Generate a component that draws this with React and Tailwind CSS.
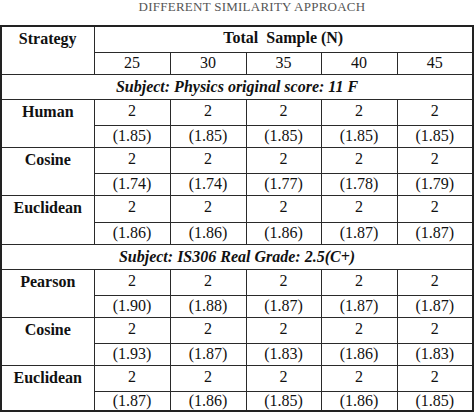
const samples = [25, 30, 35, 40, 45];

const sections = [
  {
    subject: "Subject: Physics original score: 11 F",
    rows: [
      { name: "Human", vals: ["(1.85)", "(1.85)", "(1.85)", "(1.85)", "(1.85)"], h: 26, v: 22 },
      { name: "Cosine", vals: ["(1.74)", "(1.74)", "(1.77)", "(1.78)", "(1.79)"], h: 26, v: 22 },
      { name: "Euclidean", vals: ["(1.86)", "(1.86)", "(1.86)", "(1.87)", "(1.87)"], h: 27, v: 22 },
    ],
  },
  {
    subject: "Subject: IS306 Real Grade: 2.5(C+)",
    rows: [
      { name: "Pearson", vals: ["(1.90)", "(1.88)", "(1.87)", "(1.87)", "(1.87)"], h: 26, v: 22 },
      { name: "Cosine", vals: ["(1.93)", "(1.87)", "(1.83)", "(1.86)", "(1.83)"], h: 26, v: 22 },
      { name: "Euclidean", vals: ["(1.87)", "(1.86)", "(1.85)", "(1.86)", "(1.85)"], h: 26, v: 20 },
    ],
  },
];

const cell =
  "border border-[#2a2a2a] text-center align-middle p-0 leading-[16px] text-[16px] font-[Liberation_Serif,Times_New_Roman,serif]";

export default function App() {
  return (
    <div className="w-[474px] h-[413px] bg-white text-[#111] font-[Liberation_Serif,Times_New_Roman,serif] overflow-hidden">
      <div className="h-[25px] pt-[1px] pl-[30px] text-center text-[13px] leading-[12px] text-[#555] tracking-[0.25px]">
        DIFFERENT SIMILARITY APPROACH
      </div>
      <table className="table-fixed border-collapse border-2 border-[#222] w-[472px] text-[16px] font-[Liberation_Serif,Times_New_Roman,serif] text-[#111]">
        <colgroup>
          <col className="w-[93px]" />
          <col className="w-[76px]" />
          <col className="w-[76px]" />
          <col className="w-[75px]" />
          <col className="w-[76px]" />
          <col className="w-[76px]" />
        </colgroup>
        <tbody>
          <tr className="h-[26px]">
            <td rowSpan={2} className={`${cell} align-top pt-[4px] font-bold`}>
              Strategy
            </td>
            <td colSpan={5} className={`${cell} font-bold pb-[2px]`}>
              Total&nbsp; Sample (N)
            </td>
          </tr>
          <tr className="h-[22px]">
            {samples.map((s) => (
              <td key={s} className={cell}>
                {s}
              </td>
            ))}
          </tr>
          {sections.map((sec) => (
            <>
              <tr key={sec.subject} className="h-[25px]">
                <td colSpan={6} className={`${cell} font-bold italic`}>
                  {sec.subject}
                </td>
              </tr>
              {sec.rows.map((r) => (
                <>
                  <tr key={sec.subject + r.name} style={{ height: r.h }}>
                    <td rowSpan={2} className={`${cell} align-top pt-[4px] font-bold`}>
                      {r.name}
                    </td>
                    {r.vals.map((_, i) => (
                      <td key={i} className={`${cell} pb-[3px]`}>
                        2
                      </td>
                    ))}
                  </tr>
                  <tr key={sec.subject + r.name + "v"} style={{ height: r.v }}>
                    {r.vals.map((v, i) => (
                      <td key={i} className={cell}>
                        {v}
                      </td>
                    ))}
                  </tr>
                </>
              ))}
            </>
          ))}
        </tbody>
      </table>
    </div>
  );
}
